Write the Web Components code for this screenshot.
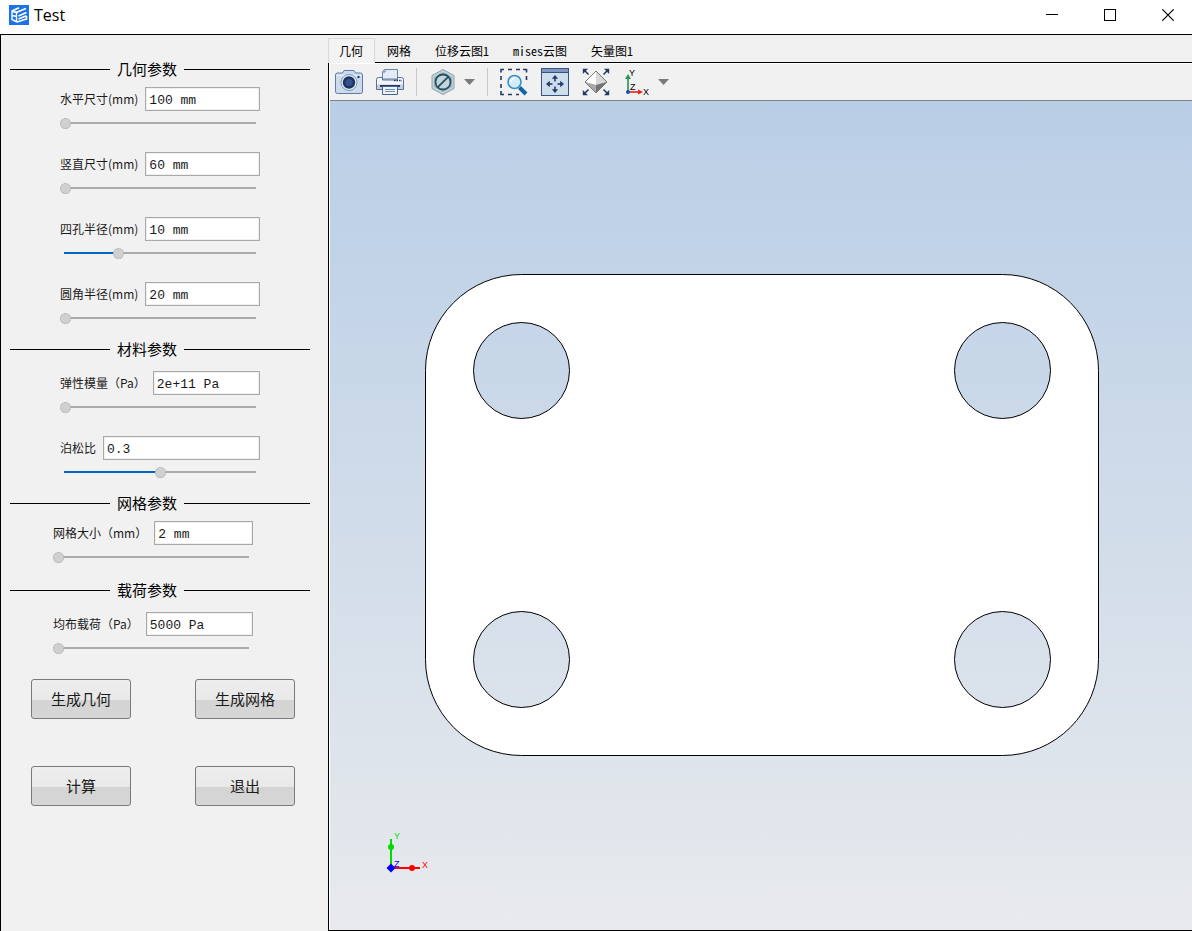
<!DOCTYPE html>
<html lang="zh-CN">
<head>
<meta charset="utf-8">
<title>Test</title>
<style>
html, body { height: 100%; margin: 0; }
body { font-family: "Noto Sans CJK SC", sans-serif; font-size: 12px; color: #1a1a1a; background: #fff; overflow: hidden; }
</style>
</head>
<body>
<app-window>
  <title-bar slot="title">Test</title-bar>
  <side-panel slot="side">
    <param-group heading="几何参数">
      <param-field label="水平尺寸(mm)" value="100 mm" level="0"></param-field>
      <param-field label="竖直尺寸(mm)" value="60 mm" level="0"></param-field>
      <param-field label="四孔半径(mm)" value="10 mm" level="28"></param-field>
      <param-field label="圆角半径(mm)" value="20 mm" level="0"></param-field>
    </param-group>
    <param-group heading="材料参数" roomy>
      <param-field label="弹性模量（Pa）" value="2e+11 Pa" level="0"></param-field>
      <param-field label="泊松比" value="0.3" level="50"></param-field>
    </param-group>
    <param-group heading="网格参数" outdent>
      <param-field label="网格大小（mm）" value="2 mm" level="0"></param-field>
    </param-group>
    <param-group heading="载荷参数" outdent roomy last>
      <param-field label="均布载荷（Pa）" value="5000 Pa" level="0"></param-field>
    </param-group>
    <action-button slot="actions">生成几何</action-button>
    <action-button slot="actions">生成网格</action-button>
    <action-button slot="actions">计算</action-button>
    <action-button slot="actions">退出</action-button>
  </side-panel>
  <view-tabs slot="view" tabs="几何,网格,位移云图1,mises云图,矢量图1">
    <tool-bar></tool-bar>
    <model-view></model-view>
  </view-tabs>
</app-window>

<script>
class Base extends HTMLElement {
  connectedCallback() {
    if (this.shadowRoot) return;
    this.attachShadow({ mode: 'open' }).innerHTML = this.render();
  }
}

customElements.define('app-window', class extends Base {
  render() {
    return `<style>
      :host { display: flex; flex-direction: column; height: 100vh; background: #f0f0f0; }
      .body { flex: 1; display: flex; min-height: 0; border-top: 1px solid #000; border-left: 1px solid #000; }
      ::slotted([slot=side]) { flex: 0 0 327px; }
      ::slotted([slot=view]) { flex: 1; min-width: 0; }
    </style>
    <slot name="title"></slot>
    <div class="body"><slot name="side"></slot><slot name="view"></slot></div>`;
  }
});

customElements.define('title-bar', class extends Base {
  render() {
    return `<style>
      :host { display: flex; align-items: center; height: 34px; padding: 0 18px 4px 9px; box-sizing: border-box; background: #fff; color: #000;
        font: 16px/20px "Open Sans", "Noto Sans CJK SC", sans-serif; }
      .name { flex: 1; margin-left: 5px; }
      .controls { display: flex; gap: 46px; }
      button { border: 0; padding: 0; background: none; width: 12px; height: 12px; }
      svg { display: block; }
    </style>
    <svg width="20" height="20" viewBox="0 0 20 20" aria-hidden="true">
      <rect width="20" height="20" fill="#1a73e8"/>
      <path d="M3 6.500V14.500L8 17M3 10.500 8 11.500M7.500 7V16.500" fill="none" stroke="#fff" stroke-width="1.400"/>
      <path d="M2.500 6.300 10 2.800M3 6.300 7.500 7.300 17 3.500" fill="none" stroke="#fff" stroke-width="1.700"/>
      <path d="M9.500 11 17.500 7.500M9.500 14 17.500 10.700M8 17 17.500 14V11" fill="none" stroke="#fff" stroke-width="1.700"/>
    </svg>
    <span class="name"><slot></slot></span>
    <div class="controls">
      <button aria-label="最小化"><svg width="12" height="12"><path d="M0 5.500H12" stroke="#000"/></svg></button>
      <button aria-label="最大化"><svg width="12" height="12"><rect x=".5" y=".5" width="11" height="11" fill="none" stroke="#000"/></svg></button>
      <button aria-label="关闭"><svg width="12" height="12"><path d="M.3.3 11.700 11.700M11.700.3.3 11.700" stroke="#000" stroke-width="1.200"/></svg></button>
    </div>`;
  }
});

customElements.define('side-panel', class extends Base {
  render() {
    return `<style>
      :host { display: flex; flex-direction: column; gap: 15px; padding: 24px 18px 0 9px; box-sizing: border-box; background: #f1f1f1; }
      ::slotted([last]) { padding-top: 2px; }
      .actions { display: grid; grid-template-columns: 100px 100px; column-gap: 64px; row-gap: 47px; margin: 10px 0 0 21px; }
    </style>
    <slot></slot>
    <div class="actions"><slot name="actions"></slot></div>`;
  }
});

customElements.define('param-group', class extends Base {
  render() {
    return `<style>
      :host { display: block; }
      h2 { display: flex; align-items: center; gap: 7px; margin: 0 0 8px; height: 20px; font-size: 15px; line-height: 20px; font-weight: 400; color: #000; }
      h2::before, h2::after { content: ""; height: 1px; background: #000; }
      h2::before { width: 100px; }
      h2::after { flex: 1; }
      :host([roomy]) h2 { margin-bottom: 12px; }
      .fields { display: grid; row-gap: 23px; padding: 0 50px; }
      :host([outdent]) .fields { padding: 0 57px 0 43px; }
    </style>
    <h2>${this.getAttribute('heading')}</h2>
    <div class="fields"><slot></slot></div>`;
  }
});

customElements.define('param-field', class extends Base {
  render() {
    const label = this.getAttribute('label'), level = this.getAttribute('level');
    return `<style>
      :host { display: grid; row-gap: 6px; }
      .row { display: flex; align-items: center; gap: 7px; }
      label { white-space: nowrap; font-size: 12px; line-height: 24px; }
      #value { flex: 1; min-width: 0; width: 0; height: 24px; box-sizing: border-box; padding: 2px 3px 0; border: 1px solid #a9a9a9; border-radius: 0;
        box-shadow: inset 0 0 0 1px #f0f0f0; background: #fff; color: #1a1a1a; font: 13px/20px "Liberation Mono", monospace; outline: 0; }
      #level { appearance: none; display: block; width: 100%; height: 12px; margin: 0;
        background:
          linear-gradient(#0067c0, #0067c0) 4px 5px / calc((100% - 11px) * var(--level) / 100) 2px no-repeat,
          linear-gradient(#aaa, #aaa) 4px 5px / calc(100% - 8px) 2px no-repeat; }
      #level::-webkit-slider-thumb { appearance: none; width: 11px; height: 11px; border: 1px dotted #a8a8a8; border-radius: 50%; background: #d0d0d0; box-sizing: border-box; }
    </style>
    <div class="row"><label for="value">${label}</label><input id="value" type="text" value="${this.getAttribute('value')}"></div>
    <input id="level" type="range" min="0" max="100" value="${level}" style="--level:${level}" aria-label="${label}">`;
  }
});

customElements.define('action-button', class extends Base {
  render() {
    return `<style>
      :host { display: block; }
      button { display: block; width: 100%; height: 40px; padding: 0; border: 1px solid #7a7a7a; border-radius: 3px; color: #1a1a1a;
        background: linear-gradient(#ededed 0, #e9e9e9 52%, #d4d4d4 52%, #d6d6d6 100%);
        font: 15px/20px "Noto Sans CJK SC", sans-serif; }
    </style>
    <button type="button"><slot></slot></button>`;
  }
});

customElements.define('view-tabs', class extends Base {
  render() {
    const tabs = this.getAttribute('tabs').split(',');
    return `<style>
      :host { display: flex; flex-direction: column; }
      .tabs { display: flex; height: 28px; box-sizing: border-box; padding-top: 3px; }
      button { border: 0; border-bottom: 1px solid #000; padding: 0 12px; height: 25px; background: none; color: #000; white-space: nowrap;
        font: 12px/23px "Noto Sans Mono CJK SC", "Noto Sans CJK SC", monospace; }
      button[aria-selected=true] { border: 1px solid #d9d9d9; border-bottom: 0; padding: 0 11px 1px 10px; background: #f3f3f3; }
      .rest { flex: 1; border-bottom: 1px solid #000; }
      .page { flex: 1; min-height: 0; display: flex; flex-direction: column; border-left: 1px solid #000; border-bottom: 1px solid #000; }
      .inner { flex: 1; min-height: 0; display: flex; flex-direction: column; border-left: 1px solid #fff; border-top: 1px solid #fff; }
      ::slotted(model-view) { flex: 1; min-height: 0; }
    </style>
    <div class="tabs" role="tablist">${tabs.map((t, i) => `<button role="tab" aria-selected="${i === 0}">${t}</button>`).join('')}<div class="rest"></div></div>
    <div class="page"><div class="inner"><slot></slot></div></div>`;
  }
});

customElements.define('tool-bar', class extends Base {
  render() {
    const caret = '<svg width="11" height="6"><path d="M0 0H11L5.500 6Z" fill="#7a7a7a"/></svg>';
    const btn = (name, art) => `<button aria-label="${name}"><svg width="28" height="28" viewBox="0 0 28 28">${art}</svg></button>`;
    const menu = name => `<button class="menu" aria-label="${name}">${caret}</button>`;
    const arrow = a => `<g transform="rotate(${a} 14 14)"><path d="M14 11.500V8" stroke="#243a66" stroke-width="1.600"/><path d="M10.800 8.800 14 5 17.200 8.800Z" fill="#243a66"/></g>`;
    const corner = a => `<g transform="rotate(${a} 14 14)"><path d="M2 2 6.500 6.500" stroke="#243a66" stroke-width="1.600"/><path d="M.8 .8H6L.8 6Z" fill="#243a66"/></g>`;
    return `<style>
      :host { display: flex; align-items: center; gap: 13px; height: 37px; box-sizing: border-box; padding-left: 5px; border-bottom: 1px solid #808080; background: #f1f1f1; }
      button { border: 0; padding: 0; background: none; }
      svg { display: block; overflow: visible; }
      .pair { display: flex; align-items: center; gap: 7px; }
      .sep { width: 1px; height: 28px; margin: 0 -1px; background: #c9c9c9; }
    </style>
    ${btn('截图', `
      <path d="M.5 7Q.5 5 2.500 5H7.500L9 2.500H19L20.500 5H25.500Q27.500 5 27.500 7V23.500Q27.500 25.500 25.500 25.500H2.500Q.5 25.500 .5 23.500Z" fill="#cbdbec" stroke="#5f7ba3"/>
      <path d="M1.500 7.500H26.500" stroke="#e9f1f9"/>
      <circle cx="14" cy="14.500" r="8" fill="#e6edf5" stroke="#7f96b6"/>
      <circle cx="14" cy="14.500" r="6.200" fill="#1b3564"/>
      <circle cx="14" cy="14.500" r="3.600" fill="#33548c"/>
      <circle cx="23.500" cy="9" r="1.200" fill="#243a66"/>`)}
    ${btn('打印', `
      <path d="M6.500 11V3.500L8.500 1.500H21.500V11Z" fill="#e3ebf4" stroke="#6a83a8"/>
      <path d="M6.500 4H9V1.500" fill="none" stroke="#6a83a8"/>
      <path d="M2.500 9.500H6.500V12H21.500V9.500H25.500Q27.500 9.500 27.500 11.500V21.500H.5V11.500Q.5 9.500 2.500 9.500Z" fill="#f3f5f8" stroke="#5b7196"/>
      <path d="M1 16.500H27V21H1Z" fill="#c3cddb"/>
      <path d="M18 12.500H26" stroke="#243a66" stroke-width="1.500" stroke-dasharray="1.500 1"/>
      <path d="M4 18H24" stroke="#243a66" stroke-width="2"/>
      <path d="M6.500 18.500H21.500V26.500H6.500Z" fill="#edf3fa" stroke="#47658f"/>
      <path d="M9 21.500H19M9 23.500H19" stroke="#7990b0"/>`)}
    <span class="sep"></span>
    <span class="pair">${btn('显示模式', `
      <path d="M14 1.500 25 7.500V20.500L14 26.500 3 20.500V7.500Z" fill="#c5d1d4" stroke="#8ba3aa"/>
      <path d="M14 4 23 9V19L14 24 5 19V9Z" fill="#9fb4b9"/>
      <circle cx="14" cy="14" r="7.500" fill="#c8d5d7" stroke="#21516b" stroke-width="1.800"/>
      <path d="M8.800 19.200 19.200 8.800" stroke="#21516b" stroke-width="1.800"/>`)}${menu('显示模式菜单')}</span>
    <span class="sep"></span>
    ${btn('框选缩放', `
      <path d="M1 4.500V1.500H4M8 1.500H12M16 1.500H20M23 1.500H26.500V4.500M26.500 8V12M1 8V12M1 16V20M1 23V26.500H4M8 26.500H12M16 26.500H19" fill="none" stroke="#243a66" stroke-width="1.600"/>
      <path d="M19.500 19.500 26 26" stroke="#1264a3" stroke-width="4"/>
      <circle cx="14.500" cy="14" r="6.500" fill="#d4ecf9" stroke="#3793c7" stroke-width="1.600"/>
      <path d="M11 14Q11 10.500 15 10" fill="none" stroke="#fff" stroke-width="1.500"/>`)}
    ${btn('平移', `
      <rect x=".5" y=".5" width="27" height="27" fill="#cfdeed" stroke="#39537f"/>
      <path d="M1 1H27V4H1Z" fill="#7f99c0"/><path d="M1 4.500H27" stroke="#39537f"/>
      <g transform="translate(0 2)">${[0, 90, 180, 270].map(arrow).join('')}</g>`)}
    ${btn('适应窗口', `
      <path d="M14 3 25 14 14 25 3 14Z" fill="#b7b7b7"/>
      <path d="M14 3V17L3 14Z" fill="#fff"/><path d="M14 3 25 14 14 17Z" fill="#d8d8d8"/>
      <path d="M3 14 14 17V25Z" fill="#aaa"/><path d="M25 14 14 17V25Z" fill="#747474"/>
      <path d="M14 3 25 14 14 25 3 14Z" fill="none" stroke="#777"/>
      ${[0, 90, 180, 270].map(corner).join('')}`)}
    <span class="pair">${btn('视图方向', `
      <path d="M5 24V9" stroke="#27925b" stroke-width="1.600"/><path d="M2 11 5 6 8 11Z" fill="#27925b"/>
      <path d="M5 24H17" stroke="#e8221d" stroke-width="1.600"/><path d="M15 21.500 20 24 15 26.500Z" fill="#e8221d"/>
      <circle cx="5" cy="24" r="2" fill="#1d4fa0"/>
      <g font-family="Liberation Sans, sans-serif" font-size="9" fill="#000"><text x="6" y="8">Y</text><text x="7" y="22">Z</text><text x="20" y="27">X</text></g>`)}${menu('视图方向菜单')}</span>`;
  }
});

customElements.define('model-view', class extends Base {
  render() {
    return `<style>
      :host { display: block; position: relative; background: linear-gradient(#b9cee6, #e8eaed); overflow: hidden; }
      .model { display: block; width: 100%; height: 100%; }
      .triad { position: absolute; left: 52px; bottom: 52px; }
    </style>
    <svg class="model" viewBox="0 0 862 829" role="img" aria-label="带四孔的圆角板">
      <path fill="#fff" stroke="#000" fill-rule="evenodd" d="M191.500 173.500H672.500A96 96 0 0 1 768.500 269.500V558.500A96 96 0 0 1 672.500 654.500H191.500A96 96 0 0 1 95.500 558.500V269.500A96 96 0 0 1 191.500 173.500Z
        M143.500 269.500a48 48 0 1 0 96 0a48 48 0 1 0-96 0Z M624.500 269.500a48 48 0 1 0 96 0a48 48 0 1 0-96 0Z
        M143.500 558.500a48 48 0 1 0 96 0a48 48 0 1 0-96 0Z M624.500 558.500a48 48 0 1 0 96 0a48 48 0 1 0-96 0Z"/>
    </svg>
    <svg class="triad" width="50" height="50" viewBox="0 0 50 50" aria-label="坐标轴">
      <path d="M9 40V11" stroke="#00dc00" stroke-width="2"/><circle cx="9" cy="19" r="3" fill="#00dc00"/>
      <path d="M9 40H38" stroke="#f00" stroke-width="2"/><circle cx="30" cy="40" r="3" fill="#f00"/>
      <path d="M9 35.500 13.500 40 9 44.500 4.500 40Z" fill="#00f"/>
      <g font-family="Liberation Sans, sans-serif" font-size="9"><text x="12" y="11" fill="#00dc00">Y</text><text x="12" y="39" fill="#00f">Z</text><text x="40" y="40" fill="#f00">X</text></g>
    </svg>`;
  }
});
</script>
</body>
</html>
